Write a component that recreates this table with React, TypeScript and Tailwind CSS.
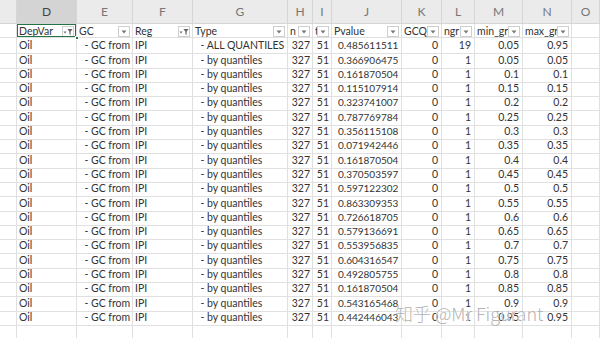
import React from "react";

const cols = ["", "D", "E", "F", "G", "H", "I", "J", "K", "L", "M", "N", "O"];
const headers = ["", "DepVar", "GC", "Reg", "Type", "n", "t", "Pvalue", "GCQ_", "ngr", "min_gr", "max_gr", ""];
const pvals = [
  "0.485611511", "0.366906475", "0.161870504", "0.115107914", "0.323741007",
  "0.787769784", "0.356115108", "0.071942446", "0.161870504", "0.370503597",
  "0.597122302", "0.863309353", "0.726618705", "0.579136691", "0.553956835",
  "0.604316547", "0.492805755", "0.161870504", "0.543165468", "0.442446043",
];
const q = ["0.05", "0.05", "0.1", "0.15", "0.2", "0.25", "0.3", "0.35", "0.4", "0.45", "0.5", "0.55", "0.6", "0.65", "0.7", "0.75", "0.8", "0.85", "0.9", "0.95"];

const gridCls =
  "grid grid-cols-[17px_60px_56px_60px_95px_25px_19px_70px_40px_33px_48px_49px_28px]";
const cell = "border-b border-r border-[#e0e0e0]";

function Drop({ filter }: { filter?: boolean }) {
  return (
    <div className="absolute right-[2px] top-[2px] flex h-[11px] w-[12px] items-center justify-center border border-[#cfcfcf] bg-white">
      {filter ? (
        <svg width="10" height="8" viewBox="0 0 10 8">
          <path d="M0.5 3.5 L3.5 3.5 L2 5.5 Z" fill="#666" />
          <path d="M4.5 1 L9.5 1 L7.6 3.8 L7.6 7 L6.4 6.2 L6.4 3.8 Z" fill="#666" />
        </svg>
      ) : (
        <svg width="6" height="4" viewBox="0 0 6 4">
          <path d="M0.5 0.5 L5.5 0.5 L3 3.5 Z" fill="#777" />
        </svg>
      )}
    </div>
  );
}

export default function App() {
  const font = { fontFamily: 'Lato, "Liberation Sans", Arial, sans-serif' };
  return (
    <div className="relative h-[338px] w-[600px] overflow-hidden bg-white text-[#333]" style={font}>
      {/* column letters */}
      <div className={`${gridCls} h-[24px] bg-[#ebebeb]`}>
        {cols.map((c, i) => (
          <div
            key={i}
            className={`flex items-end justify-center border-b border-r border-[#d6d6d6] pb-[2px] text-[12px] ${
              c === "D" ? "bg-[#d4d4d4] text-[#444]" : "text-[#777]"
            }`}
          >
            {c}
          </div>
        ))}
      </div>
      {/* header row */}
      <div className={`${gridCls} h-[14.3px] text-[10.5px] leading-[14px]`}>
        {headers.map((h, i) => (
          <div key={i} className={`relative overflow-hidden whitespace-nowrap pl-[2px] ${cell}`}>
            {h}
            {i >= 1 && i <= 11 && <Drop filter={i === 1 || i === 3} />}
            {i === 1 && (
              <div className="pointer-events-none absolute inset-[-1px] border-2 border-[#227447]" />
            )}
          </div>
        ))}
      </div>
      {pvals.map((p, r) => (
        <div key={r} className={`${gridCls} h-[14.3px] text-[10.5px] leading-[15px]`}>
          <div className={cell} />
          <div className={`pl-[2px] ${cell}`}>Oil</div>
          <div className={`whitespace-nowrap pl-[2px] ${cell}`}>&nbsp; - GC from</div>
          <div className={`pl-[2px] ${cell}`}>IPI</div>
          <div className={`whitespace-nowrap pl-[2px] ${cell}`}>
            &nbsp; - {r === 0 ? "ALL QUANTILES" : "by quantiles"}
          </div>
          <div className={`pr-[2px] text-right ${cell}`}>327</div>
          <div className={`pr-[2px] text-right ${cell}`}>51</div>
          <div className={`whitespace-nowrap pl-[6px] text-[10px] ${cell}`}>{p}</div>
          <div className={`pr-[3px] text-right ${cell}`}>0</div>
          <div className={`pr-[3px] text-right ${cell}`}>{r === 0 ? "19" : "1"}</div>
          <div className={`pr-[3px] text-right ${cell}`}>{q[r]}</div>
          <div className={`pr-[3px] text-right ${cell}`}>{r === 0 ? "0.95" : q[r]}</div>
          <div className={cell} />
        </div>
      ))}
      <div className={`${gridCls} h-[20px]`}>
        {cols.map((_, i) => (
          <div key={i} className="border-r border-[#e0e0e0]" />
        ))}
      </div>
      {/* active cell handle */}
      <div className="absolute left-[75px] top-[36px] h-[4px] w-[4px] border border-white bg-[#227447]" />
      {/* watermark */}
      <div
        className="absolute left-[395px] top-[302px] whitespace-nowrap text-[18px] leading-[22px] text-[#a0a0a0]/80"
        style={{
          fontFamily: '"Noto Sans CJK SC", "Liberation Sans", sans-serif',
          fontWeight: 300,
          textShadow: "0 0 1px #fff, 0 0 1px #fff",
        }}
      >
        知乎 @Mr Figurant
      </div>
    </div>
  );
}
